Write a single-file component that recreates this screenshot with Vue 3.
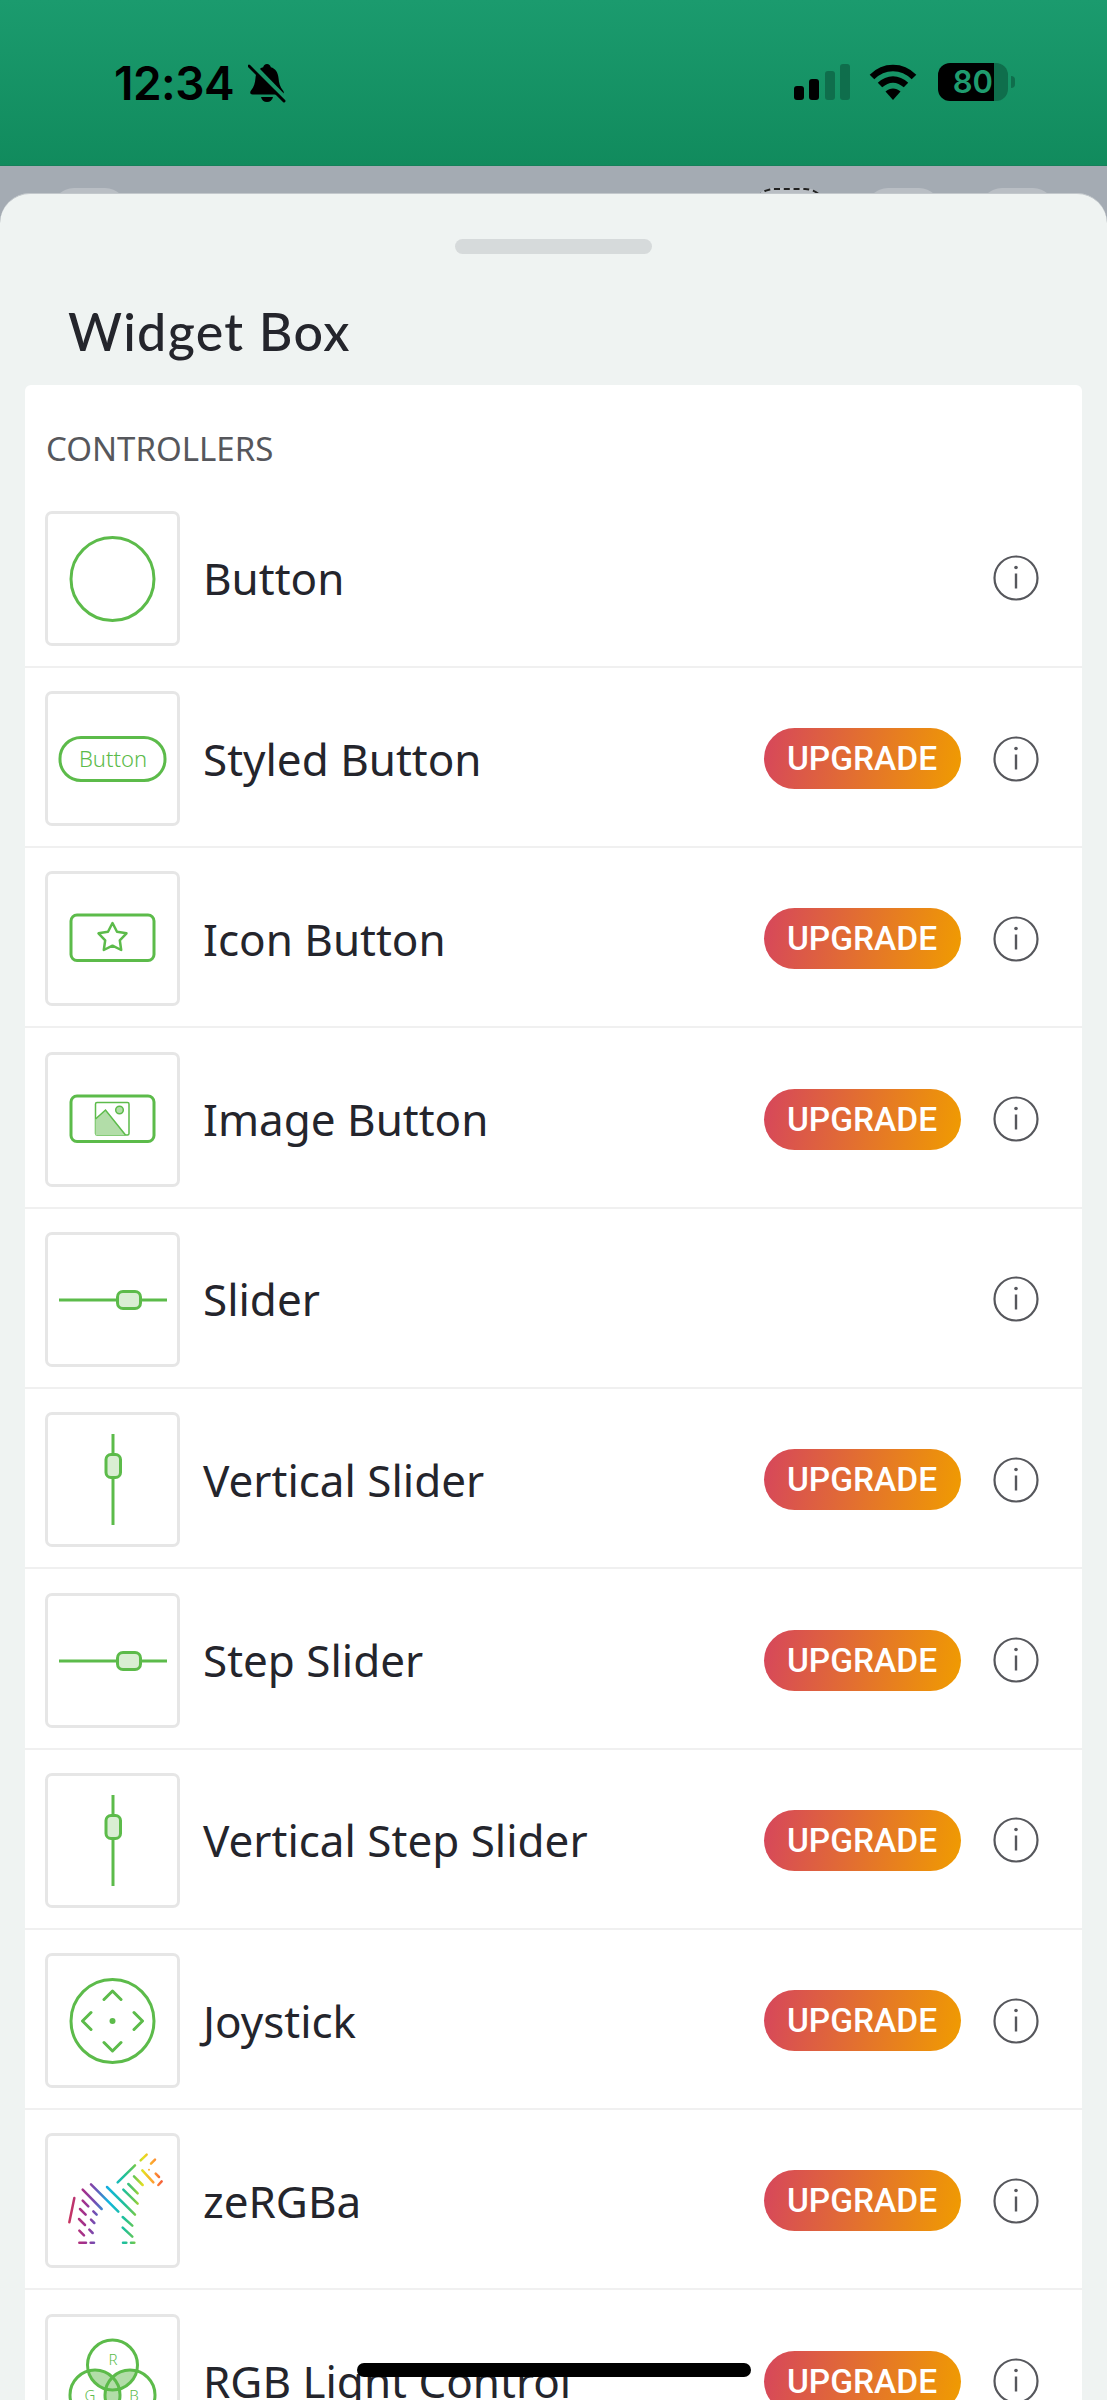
<script setup>
const widgets = [
  { name: 'Button', icon: 'button', upgrade: false },
  { name: 'Styled Button', icon: 'styled', upgrade: true },
  { name: 'Icon Button', icon: 'iconbtn', upgrade: true },
  { name: 'Image Button', icon: 'image', upgrade: true },
  { name: 'Slider', icon: 'hslider', upgrade: false },
  { name: 'Vertical Slider', icon: 'vslider', upgrade: true },
  { name: 'Step Slider', icon: 'hslider', upgrade: true },
  { name: 'Vertical Step Slider', icon: 'vslider', upgrade: true },
  { name: 'Joystick', icon: 'joystick', upgrade: true },
  { name: 'zeRGBa', icon: 'zebra', upgrade: true },
  { name: 'RGB Light Control', icon: 'rgb', upgrade: true }
]

// stripes of the zebra: x1, y1, x2, y2
const stripes = [
  [58, 155, 43, 228],
  [83, 130, 140, 188],
  [108, 114, 190, 196],
  [156, 122, 240, 205],
  [205, 130, 248, 172],
  [220, 113, 248, 141],
  [237, 90, 263, 116],
  [188, 108, 240, 57],
  [257, 42, 275, 25],
  [288, 52, 300, 40],
  [262, 72, 295, 108],
  [302, 82, 312, 92],
  [310, 116, 320, 105],
  [83, 163, 100, 180],
  [75, 188, 92, 205],
  [72, 218, 90, 236],
  [73, 253, 87, 267],
  [115, 195, 125, 205],
  [108, 220, 118, 230],
  [103, 250, 113, 260],
  [73, 289, 93, 289],
  [107, 289, 117, 289],
  [204, 289, 214, 289],
  [228, 289, 238, 289],
  [203, 212, 232, 238],
  [203, 244, 232, 271]
]
</script>

<template>
  <div class="page">
    <header class="status-bar">
      <div class="time-group">
        <span class="time">12:34</span>
        <svg class="bell" viewBox="0 0 38 40" width="38" height="40">
          <path d="M19 1c-2 0-3.500 1.400-3.800 3.200C10.500 5.500 8 9.500 7.500 15c-.4 5-1.500 9-4.500 12.500-1.500 1.800-.8 4 1.500 4h29c2.300 0 3-2.200 1.500-4-3-3.500-4.100-7.500-4.500-12.500-.5-5.500-3-9.500-7.700-10.800C22.500 2.400 21 1 19 1z" fill="#000" />
          <path d="M13 34h12c-.6 3-3 5-6 5s-5.400-2-6-5z" fill="#000" />
          <path d="M3 1l34 35" stroke="#189467" stroke-width="6" />
          <path d="M1 3l35 35" stroke="#000" stroke-width="3" stroke-linecap="round" />
        </svg>
      </div>
      <div class="indicators">
        <svg class="signal" viewBox="0 0 56 36" width="56" height="36">
          <rect x="0" y="22" width="10" height="14" rx="3" fill="#000" />
          <rect x="15" y="15" width="10" height="21" rx="3" fill="#000" />
          <rect x="31" y="7" width="10" height="29" rx="3" fill="#0f6e4c" />
          <rect x="46" y="0" width="10" height="36" rx="3" fill="#0f6e4c" />
        </svg>
        <svg class="wifi" viewBox="0 0 48 36" width="48" height="36">
          <path d="M3 13C15 1 33 1 45 13" fill="none" stroke="#000" stroke-width="6.500" />
          <path d="M11 21c8-7.500 18-7.500 26 0" fill="none" stroke="#000" stroke-width="6.500" />
          <path d="M16.500 27.500c4.500-4 10.500-4 15 0L24 36z" fill="#000" />
        </svg>
        <div class="battery">
          <div class="battery-fill">80</div>
          <div class="battery-rest"></div>
          <span class="battery-nub"></span>
        </div>
      </div>
    </header>

    <div class="backdrop">
      <span class="peek peek-left"></span>
      <span class="peek peek-dashed"></span>
      <span class="peek"></span>
      <span class="peek"></span>
    </div>

    <main class="sheet">
      <div class="handle"></div>
      <h1 class="title">Widget Box</h1>

      <section class="card">
        <h2 class="section-label">CONTROLLERS</h2>

        <div v-for="w in widgets" :key="w.name" class="row">
          <div class="thumb">
            <svg v-if="w.icon === 'button'" viewBox="0 0 129 129" width="129" height="129" class="art">
              <circle cx="64.500" cy="65" r="41.500" class="line" />
            </svg>
            <svg v-else-if="w.icon === 'styled'" viewBox="0 0 129 129" width="129" height="129" class="art">
              <rect x="12" y="43.500" width="105" height="43" rx="21" class="line" />
              <text x="65" y="73" class="art-text" font-size="22">Button</text>
            </svg>
            <svg v-else-if="w.icon === 'iconbtn'" viewBox="0 0 129 129" width="129" height="129" class="art">
              <rect x="23" y="41" width="83" height="45.500" rx="6" class="line" />
              <path d="M64.500 49l4.500 8.700 9.500 1.600-6.700 7 1.400 9.700-8.700-4.300-8.700 4.300 1.400-9.700-6.700-7 9.500-1.600z" class="line thin" stroke-linejoin="round" />
            </svg>
            <svg v-else-if="w.icon === 'image'" viewBox="0 0 129 129" width="129" height="129" class="art">
              <rect x="23" y="41" width="83" height="45.500" rx="6" class="line" />
              <rect x="47.500" y="47.500" width="33.500" height="32.500" rx="1.500" class="line hair" />
              <path d="M47.500 64l10-9 20 25h-30z" fill="#b2dda8" />
              <path d="M47.500 64l10-9 20 25" class="line hair" />
              <circle cx="71.500" cy="55" r="3.800" fill="#b2dda8" stroke="#5cbb4a" stroke-width="1.500" />
            </svg>
            <svg v-else-if="w.icon === 'hslider'" viewBox="0 0 129 129" width="129" height="129" class="art">
              <path d="M11 65h108" class="line" />
              <rect x="69.500" y="56.500" width="23" height="17" rx="5.500" class="knob" />
            </svg>
            <svg v-else-if="w.icon === 'vslider'" viewBox="0 0 129 129" width="129" height="129" class="art">
              <path d="M65 19v91" class="line" />
              <rect x="58" y="39.500" width="14.500" height="23" rx="5" class="knob" />
            </svg>
            <svg v-else-if="w.icon === 'joystick'" viewBox="0 0 129 129" width="129" height="129" class="art">
              <circle cx="64.500" cy="65" r="41.500" class="line" />
              <path d="M56 43.500l8.500-8.500 8.500 8.500M56 86.500l8.500 8.500 8.500-8.500M43 56.500L34.500 65l8.500 8.500M86 56.500l8.500 8.500-8.500 8.500" class="line" stroke-linecap="round" stroke-linejoin="round" />
              <circle cx="64.500" cy="65" r="3" fill="#5cbb4a" />
            </svg>
            <svg v-else-if="w.icon === 'zebra'" viewBox="-21 -31 387 387" width="129" height="129" class="art">
              <defs>
                <linearGradient id="rainbow" gradientUnits="userSpaceOnUse" x1="40" y1="0" x2="320" y2="0">
                  <stop offset="0" stop-color="#c9355f" />
                  <stop offset="0.18" stop-color="#a0308f" />
                  <stop offset="0.29" stop-color="#7050b5" />
                  <stop offset="0.43" stop-color="#0fb6e0" />
                  <stop offset="0.61" stop-color="#20c096" />
                  <stop offset="0.71" stop-color="#6cc850" />
                  <stop offset="0.80" stop-color="#e6e01f" />
                  <stop offset="0.91" stop-color="#ffa030" />
                  <stop offset="1" stop-color="#f5603a" />
                </linearGradient>
              </defs>
              <path
                v-for="(s, i) in stripes"
                :key="i"
                :d="`M${s[0]} ${s[1]}L${s[2]} ${s[3]}`"
                stroke="url(#rainbow)"
                stroke-width="7.500"
                stroke-linecap="round"
                fill="none"
              />
              <circle cx="282" cy="70" r="3" fill="#ffb030" />
            </svg>
            <svg v-else-if="w.icon === 'rgb'" viewBox="0 0 129 129" width="129" height="129" class="art">
              <defs>
                <clipPath id="clip-r"><circle cx="64.500" cy="48" r="25" /></clipPath>
                <clipPath id="clip-g"><circle cx="47" cy="78" r="25" /></clipPath>
              </defs>
              <g clip-path="url(#clip-r)">
                <circle cx="47" cy="78" r="25" fill="#b2dda8" />
                <circle cx="82" cy="78" r="25" fill="#b2dda8" />
              </g>
              <g clip-path="url(#clip-g)">
                <circle cx="82" cy="78" r="25" fill="#b2dda8" />
              </g>
              <circle cx="64.500" cy="48" r="25" class="line" />
              <circle cx="47" cy="78" r="25" class="line" />
              <circle cx="82" cy="78" r="25" class="line" />
              <text x="65" y="48" class="art-text" font-size="15">R</text>
              <text x="42" y="84" class="art-text" font-size="15">G</text>
              <text x="86" y="84" class="art-text" font-size="15">B</text>
            </svg>
          </div>

          <span class="name">{{ w.name }}</span>
          <span v-if="w.upgrade" class="upgrade">UPGRADE</span>

          <svg class="info" viewBox="0 0 46 46" width="46" height="46">
            <circle cx="23" cy="23" r="21.500" fill="none" stroke="#56575c" stroke-width="2.200" />
            <circle cx="23" cy="12.500" r="1.800" fill="#56575c" />
            <path d="M23 18.500v15" stroke="#56575c" stroke-width="2.400" />
          </svg>
        </div>
      </section>
    </main>

    <div class="home-indicator"></div>
  </div>
</template>

<style scoped>
.page {
  position: relative;
  width: 1107px;
  height: 2400px;
  overflow: hidden;
  background: #a4abb3;
  font-family: "Noto Sans", sans-serif;
}

/* status bar */
.status-bar {
  height: 166px;
  display: flex;
  align-items: flex-start;
  justify-content: space-between;
  padding: 62px 99px 0 114px;
  box-sizing: border-box;
  background: linear-gradient(#1b9b6e, #118b5d);
  border-bottom: 1px solid #16805a;
}
.time-group {
  display: flex;
  align-items: center;
  gap: 14px;
}
.time {
  font-family: Inter, sans-serif;
  font-size: 46px;
  font-weight: 600;
  line-height: 42px;
  letter-spacing: -0.5px;
  color: #000;
}
.indicators {
  display: flex;
  align-items: center;
  gap: 21px;
  margin-top: 1px;
}
.signal {
  margin-right: -2px;
}
.battery {
  position: relative;
  display: flex;
  width: 70px;
  height: 38px;
  border-radius: 12px;
}
.battery-fill {
  width: 56px;
  background: #000;
  border-radius: 12px 0 0 12px;
  color: #1f9c6f;
  font-family: Inter, sans-serif;
  font-size: 31px;
  font-weight: 600;
  line-height: 38px;
  text-align: right;
  padding-right: 1px;
  box-sizing: border-box;
}
.battery-rest {
  flex: 1;
  background: #0f6e4c;
  border-radius: 0 12px 12px 0;
}
.battery-nub {
  position: absolute;
  left: 73px;
  top: 13px;
  width: 4px;
  height: 12px;
  background: #0f6e4c;
  border-radius: 0 6px 6px 0;
}

/* what peeks out behind the sheet */
.backdrop {
  height: 27px;
  overflow: hidden;
  display: flex;
  gap: 39px;
  justify-content: flex-end;
  padding: 22px 52px 0 52px;
  box-sizing: border-box;
  background: #a4abb3;
}
.peek {
  flex: none;
  width: 75px;
  height: 60px;
  border-radius: 22px;
  background: #b9bec4;
}
.peek-left {
  margin-right: auto;
}
.peek-dashed {
  border: 2px dashed #222;
  box-sizing: border-box;
}

/* sheet */
.sheet {
  background: #eff3f2;
  border-radius: 30px 30px 0 0;
  padding: 45px 25px 0;
  height: 2300px;
  box-sizing: border-box;
  border-top: 1px solid #c3c8cc;
}
.handle {
  width: 197px;
  height: 15px;
  margin: 0 auto;
  border-radius: 8px;
  background: #d6dadb;
}
.title {
  margin: 47px 0 0 43px;
  height: 84px;
  font-family: Lato, sans-serif;
  font-size: 52px;
  line-height: 60px;
  font-weight: 500;
  letter-spacing: 1.3px;
  color: #24252c;
}
.card {
  background: #fff;
  border-radius: 6px 6px 0 0;
}
.section-label {
  margin: 0;
  height: 102.5px;
  box-sizing: border-box;
  padding: 43px 0 0 21px;
  font-size: 33px;
  line-height: 42px;
  font-weight: 400;
  color: #56575c;
}
.row {
  display: flex;
  align-items: center;
  height: 180.3px;
  box-sizing: border-box;
  padding: 23.3px 43px 20px 20px;
  border-bottom: 2.5px solid #f0f0f0;
}
.thumb {
  flex: none;
  width: 135px;
  height: 135px;
  box-sizing: border-box;
  border: 3px solid #e6e6e6;
  border-radius: 7px;
  background: #fff;
}
.art {
  display: block;
}
.line {
  fill: none;
  stroke: #5cbb4a;
  stroke-width: 3;
}
.thin {
  stroke-width: 2.5;
}
.hair {
  stroke-width: 1.500;
}
.knob {
  fill: #d9eed3;
  stroke: #5cbb4a;
  stroke-width: 3;
}
.art-text {
  fill: #5cbb4a;
  font-family: "Noto Sans", sans-serif;
  font-weight: 300;
  text-anchor: middle;
}
.name {
  flex: 1;
  margin-left: 23px;
  font-size: 44px;
  line-height: 50px;
  color: #24252c;
}
.upgrade {
  flex: none;
  width: 197px;
  height: 61px;
  margin-right: 32.5px;
  border-radius: 31px;
  background: linear-gradient(100deg, #d6465c, #f09c00);
  color: #fff;
  font-family: Roboto, sans-serif;
  font-size: 33.5px;
  font-weight: 500;
  line-height: 61px;
  text-align: center;
}
.info {
  flex: none;
}

.home-indicator {
  position: absolute;
  left: 357px;
  top: 2363px;
  width: 394px;
  height: 14px;
  border-radius: 7px;
  background: #000;
}
</style>

<style>
body {
  background: #eff3f2;
}
</style>
